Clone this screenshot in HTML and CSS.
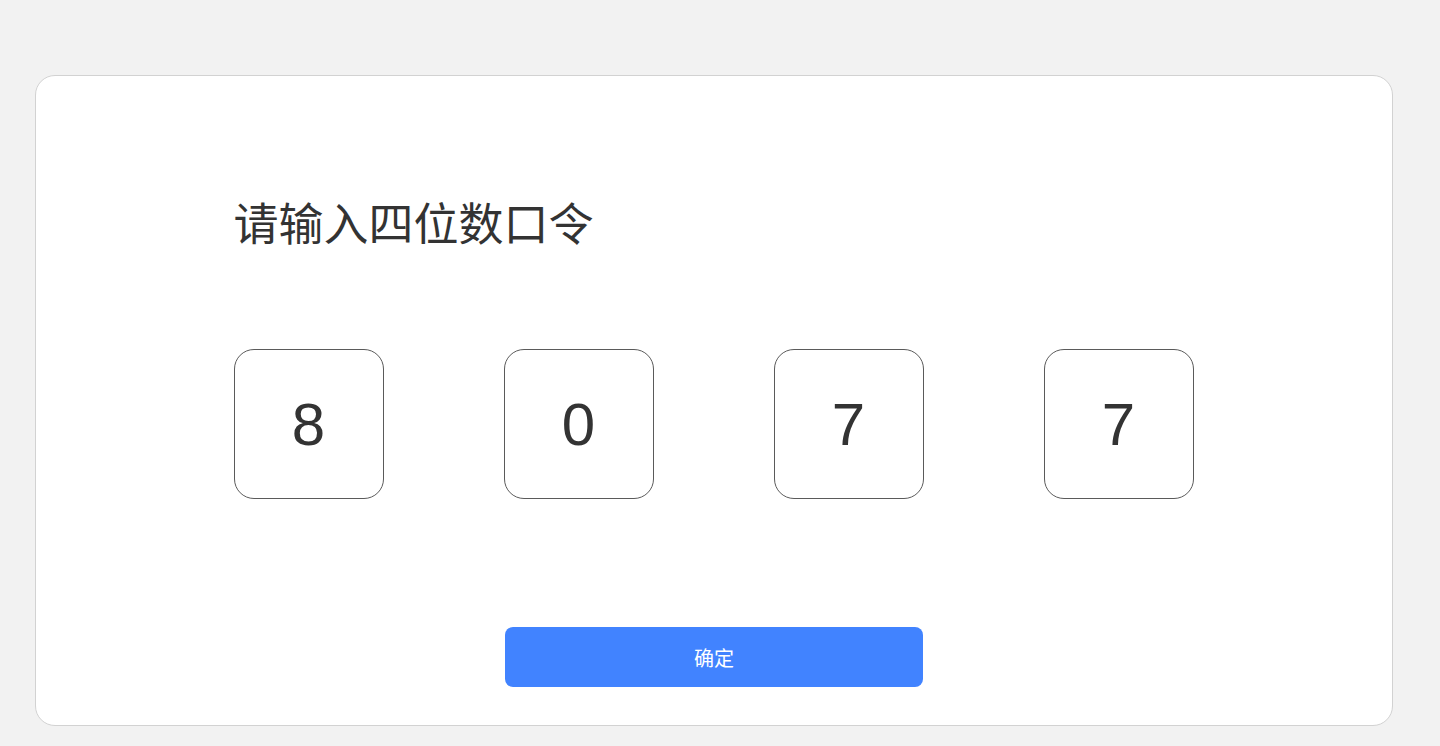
FILE: index.html
```html
<!DOCTYPE html>
<html lang="zh-CN">
<head>
<meta charset="utf-8">
<title>口令</title>
<link rel="stylesheet" href="styles.css">
</head>
<body>
<div class="card">
  <div class="content">
    <h1 class="title">请输入四位数口令</h1>
    <div class="codes">
      <div class="code">8</div>
      <div class="code">0</div>
      <div class="code">7</div>
      <div class="code">7</div>
    </div>
  </div>
  <button class="confirm">确定</button>
</div>
</body>
</html>
```
FILE: styles.css
```css
html, body {
  margin: 0;
  padding: 0;
  background: #f2f2f2;
}
body {
  padding: 75px 47px 20px 35px;
  font-family: "Liberation Sans", "Noto Sans CJK SC", sans-serif;
  color: #333;
}
.card {
  box-sizing: border-box;
  width: 1358px;
  height: 651px;
  background: #fff;
  border: 1px solid #d2d2d2;
  border-radius: 20px;
  display: flex;
  flex-direction: column;
  align-items: center;
  padding-top: 122px;
}
.content {
  width: 961px;
  padding-right: 1px;
  box-sizing: border-box;
  display: flex;
  flex-direction: column;
}
.title {
  margin: 0;
  font-family: "Noto Sans CJK SC", sans-serif;
  font-weight: 400;
  font-size: 45px;
  line-height: 48px;
  color: #333;
}
.codes {
  margin-top: 103px;
  display: flex;
  justify-content: space-between;
}
.code {
  box-sizing: border-box;
  width: 150px;
  height: 150px;
  border: 1px solid #5a5a5a;
  border-radius: 20px;
  display: flex;
  align-items: center;
  justify-content: center;
  font-family: "Liberation Sans", sans-serif;
  font-size: 60px;
  color: #333;
}
.confirm {
  margin-top: 128px;
  width: 418px;
  height: 60px;
  border: none;
  border-radius: 8px;
  background: #4183ff;
  color: #fff;
  font-family: "Noto Sans CJK SC", sans-serif;
  font-size: 20px;
  padding: 0;
}
```
